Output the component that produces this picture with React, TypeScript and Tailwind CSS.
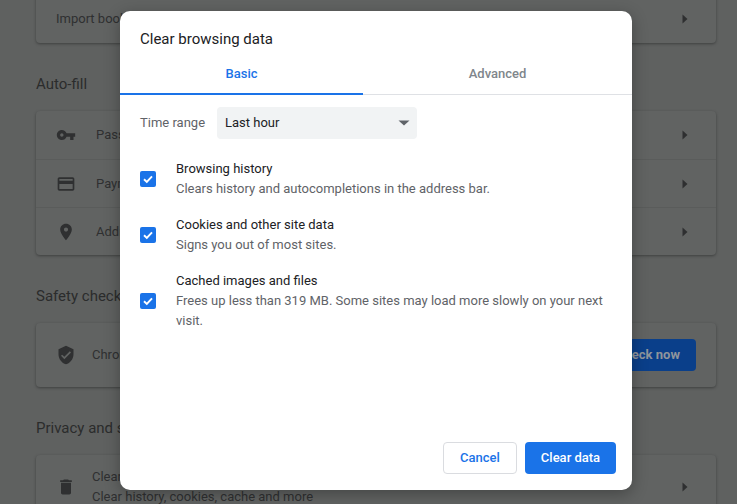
import React from "react";

const Caret = () => (
  <svg width="6" height="10" viewBox="0 0 6 10" className="shrink-0">
    <path d="M0.5 0.5L5.5 5L0.5 9.5Z" fill="#2e2f30" />
  </svg>
);

const Icon = ({ d }: { d: string }) => (
  <svg width="20" height="20" viewBox="0 0 24 24" className="shrink-0" fill="#2f3031">
    <path d={d} />
  </svg>
);

const key = "M12.65 10C11.83 7.67 9.61 6 7 6c-3.31 0-6 2.69-6 6s2.69 6 6 6c2.61 0 4.83-1.67 5.65-4H17v4h4v-4h2v-4H12.65zM7 14c-1.1 0-2-.9-2-2s.9-2 2-2 2 .9 2 2-.9 2-2 2z";
const card = "M20 4H4c-1.11 0-1.99.89-1.99 2L2 18c0 1.11.89 2 2 2h16c1.11 0 2-.89 2-2V6c0-1.11-.89-2-2-2zm0 14H4v-6h16v6zm0-10H4V6h16v2z";
const pin = "M12 2C8.13 2 5 5.13 5 9c0 5.25 7 13 7 13s7-7.75 7-13c0-3.87-3.13-7-7-7zm0 9.5c-1.38 0-2.5-1.12-2.5-2.5s1.12-2.5 2.5-2.5 2.5 1.12 2.5 2.5-1.12 2.5-2.5 2.5z";
const shield = "M12 1L3 5v6c0 5.55 3.84 10.74 9 12 5.16-1.26 9-6.45 9-12V5l-9-4zm-2 16l-4-4 1.41-1.41L10 14.17l6.59-6.59L18 9l-8 8z";
const trash = "M6 19c0 1.1.9 2 2 2h8c1.1 0 2-.9 2-2V7H6v12zM19 4h-3.5l-1-1h-5l-1 1H5v2h14V4z";

const Row = ({ icon, label, border }: { icon: string; label: string; border?: boolean }) => (
  <div className={`flex h-12 items-center pl-[20px] pr-[28px] ${border ? "border-t border-[#5a5c5b]" : ""}`}>
    <Icon d={icon} />
    <span className="ml-[20px] flex-1 text-[13px] text-[#2f3031]">{label}</span>
    <Caret />
  </div>
);

const cardCls = "ml-[36px] w-[680px] rounded-[4px] bg-[#616362] shadow-[0_1px_3px_rgba(0,0,0,0.35)]";
const headCls = "ml-[36px] text-[15px] leading-[20px] text-[#2b2c2c]";

const Check = () => (
  <span className="flex h-4 w-4 shrink-0 items-center justify-center rounded-[2px] bg-[#1a73e8]">
    <svg width="12" height="12" viewBox="0 0 12 12" fill="none">
      <path d="M2 6.3L4.8 9L10 3.4" stroke="#fff" strokeWidth="1.9" />
    </svg>
  </span>
);

const Option = ({ title, children }: { title: string; children: React.ReactNode }) => (
  <div className="flex items-center pl-[20px] pr-[20px]">
    <Check />
    <div className="ml-[20px] text-[13px] leading-[20px]">
      <div className="text-[#202124]">{title}</div>
      <div className="text-[#5f6368]">{children}</div>
    </div>
  </div>
);

export default function App() {
  return (
    <div
      className="relative h-[504px] w-[737px] overflow-hidden bg-[#5f6160]"
      style={{ fontFamily: "Roboto, 'Liberation Sans', sans-serif" }}
    >
      <div className="flex flex-col">
        <div className={`${cardCls} mt-[-5px] flex h-12 items-center pl-[20px] pr-[28px]`}>
          <span className="flex-1 text-[13px] text-[#2f3031]">Import bookmarks and settings</span>
          <Caret />
        </div>
        <div className={`${headCls} mt-[31px]`}>Auto-fill</div>
        <div className={`${cardCls} mt-[17px]`}>
          <Row icon={key} label="Passwords" />
          <Row icon={card} label="Payment methods" border />
          <Row icon={pin} label="Addresses and more" border />
        </div>
        <div className={`${headCls} mt-[31px]`}>Safety check</div>
        <div className={`${cardCls} mt-[17px] flex h-16 items-center pl-[20px] pr-[20px]`}>
          <Icon d={shield} />
          <span className="ml-[16px] flex-1 text-[13px] text-[#2f3031]">Chrome can help keep you safe</span>
          <span className="flex h-8 w-[96px] items-center justify-center rounded-[4px] bg-[#0a3f8a] text-[13px] font-bold text-[#8f959c]">
            Check now
          </span>
        </div>
        <div className={`${headCls} mt-[31px]`}>Privacy and security</div>
        <div className={`${cardCls} mt-[17px] flex h-16 items-center pl-[20px] pr-[28px]`}>
          <Icon d={trash} />
          <div className="ml-[16px] flex-1 text-[13px] leading-[20px] text-[#2f3031]">
            <div>Clear browsing data</div>
            <div>Clear history, cookies, cache and more</div>
          </div>
          <Caret />
        </div>
      </div>

      <div className="absolute left-[120px] top-[11px] flex h-[479px] w-[512px] flex-col rounded-[10px] bg-white shadow-[0_4px_16px_rgba(0,0,0,0.3)]">
        <div className="pl-[20px] pt-[18px] text-[15px] leading-[20px] text-[#202124]">Clear browsing data</div>
        <div className="mt-[13px] flex h-[33px] border-b border-[#dfe1e5] text-[13px] font-medium">
          <div className="relative flex h-[33px] w-[243px] items-start justify-center pt-[3px] leading-[18px] text-[#1a73e8]">
            Basic
            <span className="absolute bottom-0 left-0 h-[2px] w-full bg-[#1a73e8]"></span>
          </div>
          <div className="flex flex-1 items-start justify-center pt-[3px] leading-[18px] text-[#80868b]">Advanced</div>
        </div>
        <div className="mt-[12px] flex items-center pl-[20px]">
          <span className="w-[77px] text-[13px] text-[#5f6368]">Time range</span>
          <div className="flex h-8 w-[200px] items-center justify-between rounded-[4px] bg-[#f1f3f4] pl-[8px] pr-[7px] text-[13px] text-[#202124]">
            Last hour
            <svg width="12" height="6" viewBox="0 0 12 6"><path d="M0.5 0.5H11.5L6 5.5Z" fill="#5f6368" /></svg>
          </div>
        </div>
        <div className="mt-[20px] flex flex-col gap-[16px]">
          <Option title="Browsing history">Clears history and autocompletions in the address bar.</Option>
          <Option title="Cookies and other site data">Signs you out of most sites.</Option>
          <Option title="Cached images and files">Frees up less than 319 MB. Some sites may load more slowly on your next visit.</Option>
        </div>
        <div className="mt-auto flex justify-end gap-[8px] pb-[16px] pr-[16px] text-[13px] font-medium">
          <span className="flex h-8 w-[74px] items-center justify-center rounded-[4px] border border-[#dadce0] text-[#1a73e8]">Cancel</span>
          <span className="flex h-8 w-[91px] items-center justify-center rounded-[4px] bg-[#1a73e8] text-white">Clear data</span>
        </div>
      </div>
    </div>
  );
}
